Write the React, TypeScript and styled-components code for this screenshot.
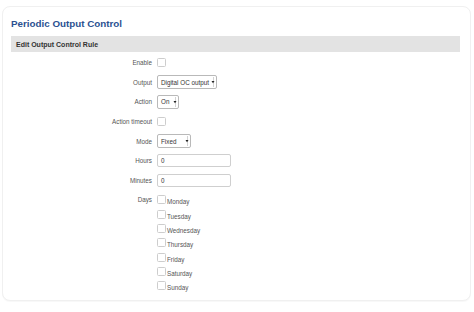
import React from "react";
import styled, { createGlobalStyle } from "styled-components";

const Global = createGlobalStyle`
  html, body { margin: 0; padding: 0; background: #ffffff; }
  body { font-family: "Liberation Sans", Arial, sans-serif; }
`;

const Page = styled.div`
  padding: 6px 3px 11px 2px;
`;

const Card = styled.div`
  border: 1px solid #f0f0f0;
  border-radius: 8px;
  box-shadow: 0 1px 1px rgba(0, 0, 0, 0.03);
  padding: 11px 10px 7px 8px;
  background: #fff;
`;

const Title = styled.h2`
  margin: 0;
  font-size: 9.8px;
  line-height: 12px;
  height: 18px;
  font-weight: bold;
  color: #2b5191;
`;

const SectionBar = styled.div`
  background: #e3e3e3;
  height: 16px;
  display: flex;
  align-items: center;
  padding-left: 5px;
  font-size: 7px;
  font-weight: bold;
  color: #333;
`;

const Form = styled.div`
  display: grid;
  grid-template-columns: 141px 1fr;
  column-gap: 5px;
  padding-top: 1px;
`;

const Label = styled.div`
  font-size: 6.3px;
  color: #555;
  text-align: right;
  height: 19.6px;
  display: flex;
  align-items: center;
  justify-content: flex-end;
`;

const Cell = styled.div`
  height: 19.6px;
  display: flex;
  align-items: center;
`;

const Box = styled.span`
  display: inline-block;
  width: 7px;
  height: 7px;
  border: 1px solid #cdcdcd;
  border-radius: 1.5px;
  background: #fff;
  flex: none;
`;

const SelectBox = styled.div<{ $w: number }>`
  position: relative;
  width: ${(p) => p.$w}px;
  height: 14px;
  box-sizing: border-box;
  border: 1px solid #b9b9b9;
  border-radius: 2px;
  background: #fff;
  font-size: 6.3px;
  color: #333;
  display: flex;
  align-items: center;
  padding-left: 3px;
`;

const Arrow = styled.svg`
  position: absolute;
  right: 1px;
  top: 1px;
`;

const TextInput = styled.div`
  width: 74px;
  height: 13px;
  box-sizing: border-box;
  border: 1px solid #cfcfcf;
  border-radius: 2px;
  font-size: 6.3px;
  color: #333;
  display: flex;
  align-items: center;
  padding-left: 3px;
`;

const DaysLabel = styled(Label)`
  height: 14.3px;
  margin-top: 2.6px;
`;

const DayList = styled.div`
  display: flex;
  flex-direction: column;
  padding-top: 2.6px;
`;

const Day = styled.div`
  height: 14.3px;
  display: flex;
  align-items: center;
  gap: 1px;
`;

const DayText = styled.span`
  font-size: 6.3px;
  color: #555;
  margin-top: 4px;
`;

const Select = ({ w, value }: { w: number; value: string }) => (
  <SelectBox $w={w}>
    {value}
    <Arrow width="4" height="10" viewBox="0 0 4 10">
      <line x1="2.5" y1="0" x2="2.5" y2="10" stroke="#c8c8c8" strokeWidth="0.8" />
      <path d="M0.5 4 L3.5 4 L2 6.2 Z" fill="#222" />
    </Arrow>
  </SelectBox>
);

const days = ["Monday", "Tuesday", "Wednesday", "Thursday", "Friday", "Saturday", "Sunday"];

export default function App() {
  return (
    <>
      <Global />
      <Page>
        <Card>
          <Title>Periodic Output Control</Title>
          <SectionBar>Edit Output Control Rule</SectionBar>
          <Form>
            <Label>Enable</Label>
            <Cell><Box /></Cell>
            <Label>Output</Label>
            <Cell><Select w={60} value="Digital OC output" /></Cell>
            <Label>Action</Label>
            <Cell><Select w={22} value="On" /></Cell>
            <Label>Action timeout</Label>
            <Cell><Box /></Cell>
            <Label>Mode</Label>
            <Cell><Select w={34} value="Fixed" /></Cell>
            <Label>Hours</Label>
            <Cell><TextInput>0</TextInput></Cell>
            <Label>Minutes</Label>
            <Cell><TextInput>0</TextInput></Cell>
            <div><DaysLabel>Days</DaysLabel></div>
            <DayList>
              {days.map((d) => (
                <Day key={d}>
                  <Box />
                  <DayText>{d}</DayText>
                </Day>
              ))}
            </DayList>
          </Form>
        </Card>
      </Page>
    </>
  );
}
